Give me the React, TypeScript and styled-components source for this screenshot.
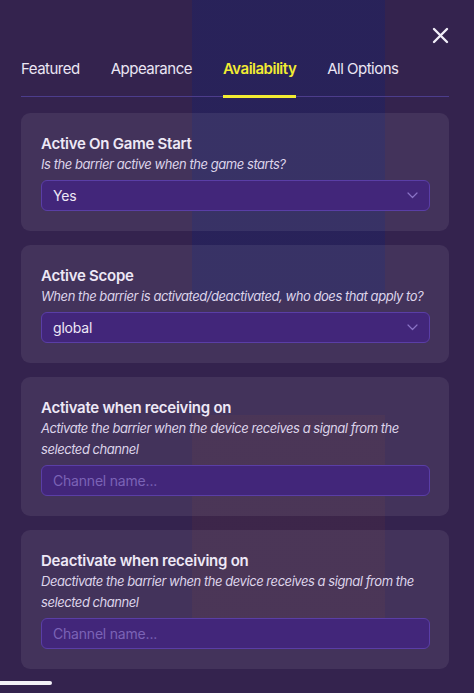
import React from "react";
import styled, { createGlobalStyle } from "styled-components";

const Global = createGlobalStyle`
  html, body { margin: 0; padding: 0; height: 100%; overflow: hidden; }
  body {
    font-family: Inter, "Noto Sans", "Liberation Sans", sans-serif;
    background-color: #34234e;
    background-image:
      linear-gradient(rgba(38, 34, 92, 0.82), rgba(38, 34, 92, 0.82)),
      linear-gradient(rgba(74, 42, 68, 0.4), rgba(74, 42, 68, 0.4));
    background-size: 193px 300px, 193px 210px;
    background-position: 192px 0, 192px 415px;
    background-repeat: no-repeat;
  }
  * { box-sizing: border-box; }
`;

const Page = styled.div`
  width: 474px;
  height: 693px;
  padding: 27px 25px 0 21px;
  display: flex;
  flex-direction: column;
`;

const CloseRow = styled.div`
  display: flex;
  justify-content: flex-end;
  height: 16px;
`;

const CloseButton = styled.button`
  width: 17px;
  height: 17px;
  padding: 0;
  border: none;
  background: none;
  display: flex;
  align-items: center;
  justify-content: center;
  cursor: pointer;
`;

const Tabs = styled.div`
  margin-top: 16px;
  display: flex;
  gap: 31px;
  border-bottom: 1px solid #4c3d8c;
`;

const Tab = styled.div<{ $active?: boolean }>`
  font-size: 15px;
  line-height: 20px;
  font-weight: ${(p) => (p.$active ? 600 : 400)};
  color: ${(p) => (p.$active ? "#f2ec32" : "#ebe6f4")};
  padding-bottom: 16px;
  border-bottom: 3px solid ${(p) => (p.$active ? "#f2ec32" : "transparent")};
  margin-bottom: -2px;
  letter-spacing: -0.5px;
`;

const Cards = styled.div`
  margin-top: 16px;
  display: flex;
  flex-direction: column;
  gap: 14px;
`;

const Card = styled.section`
  background: rgba(255, 255, 255, 0.075);
  border-radius: 9px;
  padding: 21px 19px 20px 20px;
  display: flex;
  flex-direction: column;
`;

const Title = styled.h3`
  margin: 0;
  font-size: 15px;
  line-height: 20px;
  font-weight: 600;
  color: #eee8f6;
  letter-spacing: -0.25px;
`;

const Subtitle = styled.p`
  margin: 0 0 5px;
  font-size: 13px;
  line-height: 21px;
  font-style: italic;
  color: #ddd4ea;
  letter-spacing: -0.45px;
`;

const Field = styled.div`
  height: 31px;
  border: 1.5px solid #5a3ea6;
  border-radius: 6px;
  background: #42267a;
  display: flex;
  align-items: center;
  justify-content: space-between;
  padding: 0 11px 0 11px;
`;

const FieldText = styled.span<{ $placeholder?: boolean }>`
  font-size: 14px;
  letter-spacing: -0.2px;
  color: ${(p) => (p.$placeholder ? "#7b63b6" : "#eee8f6")};
`;

const ScrollIndicator = styled.div`
  position: fixed;
  left: 0;
  bottom: 8px;
  width: 52px;
  height: 4px;
  border-radius: 0 3px 3px 0;
  background: #f4f2f8;
`;

const Chevron = () => (
  <svg width="11" height="7" viewBox="0 0 11 7" fill="none">
    <path d="M1 1l4.5 4.5L10 1" stroke="#8a72c6" strokeWidth="1.2" strokeLinecap="round" strokeLinejoin="round" />
  </svg>
);

const CloseIcon = () => (
  <svg width="17" height="17" viewBox="0 0 17 17" fill="none">
    <path d="M2 2l13 13M15 2L2 15" stroke="#f1eef8" strokeWidth="2.4" strokeLinecap="round" />
  </svg>
);

type Item = {
  title: string;
  subtitle: string;
  value?: string;
  placeholder?: string;
};

const items: Item[] = [
  { title: "Active On Game Start", subtitle: "Is the barrier active when the game starts?", value: "Yes" },
  {
    title: "Active Scope",
    subtitle: "When the barrier is activated/deactivated, who does that apply to?",
    value: "global",
  },
  {
    title: "Activate when receiving on",
    subtitle: "Activate the barrier when the device receives a signal from the selected channel",
    placeholder: "Channel name...",
  },
  {
    title: "Deactivate when receiving on",
    subtitle: "Deactivate the barrier when the device receives a signal from the selected channel",
    placeholder: "Channel name...",
  },
];

export default function App() {
  return (
    <>
      <Global />
      <Page>
        <CloseRow>
          <CloseButton aria-label="Close">
            <CloseIcon />
          </CloseButton>
        </CloseRow>
        <Tabs>
          <Tab>Featured</Tab>
          <Tab>Appearance</Tab>
          <Tab $active>Availability</Tab>
          <Tab>All Options</Tab>
        </Tabs>
        <Cards>
          {items.map((it) => (
            <Card key={it.title}>
              <Title>{it.title}</Title>
              <Subtitle>{it.subtitle}</Subtitle>
              <Field>
                {it.value ? (
                  <>
                    <FieldText>{it.value}</FieldText>
                    <Chevron />
                  </>
                ) : (
                  <FieldText $placeholder>{it.placeholder}</FieldText>
                )}
              </Field>
            </Card>
          ))}
        </Cards>
      </Page>
      <ScrollIndicator />
    </>
  );
}
